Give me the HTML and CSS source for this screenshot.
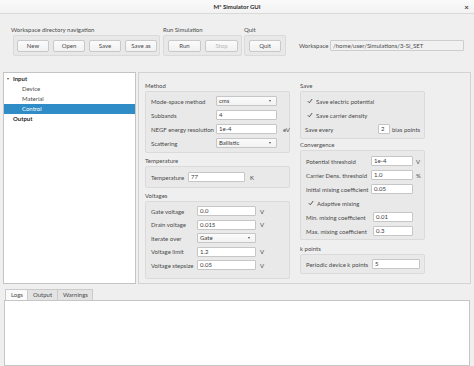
FILE: index.html
```html
<!DOCTYPE html>
<html>
<head>
<meta charset="utf-8">
<link rel="stylesheet" href="styles.css">
</head>
<body>
<div class="window">
  <div class="titlebar">
    <span class="title">M* Simulator GUI</span>
    <span class="close">×</span>
  </div>
  <div class="toolbar">
    <div class="tgroup g1">
      <div class="glabel">Workspace directory navigation</div>
      <div class="gframe">
        <div class="btn">New</div><div class="btn">Open</div><div class="btn">Save</div><div class="btn">Save as</div>
      </div>
    </div>
    <div class="tgroup g2">
      <div class="glabel">Run Simulation</div>
      <div class="gframe">
        <div class="btn w33">Run</div><div class="btn w33 disabled">Stop</div>
      </div>
    </div>
    <div class="tgroup g3">
      <div class="glabel">Quit</div>
      <div class="gframe">
        <div class="btn">Quit</div>
      </div>
    </div>
    <div class="workspace">
      <span class="wlabel">Workspace</span>
      <div class="wfield">/home/user/Simulations/3-Si_SET</div>
    </div>
  </div>

  <div class="main">
    <div class="tree">
      <div class="titem top"><span class="arrow"></span>Input</div>
      <div class="titem child">Device</div>
      <div class="titem child">Material</div>
      <div class="titem child selected">Control</div>
      <div class="titem top">Output</div>
    </div>
    <div class="content">
      <div class="col left">
        <div class="slabel">Method</div>
        <div class="frame method">
          <div class="row"><span class="lbl">Mode-space method</span><div class="combo">cms<span class="tri"></span></div></div>
          <div class="row"><span class="lbl">Subbands</span><div class="input">4</div></div>
          <div class="row"><span class="lbl">NEGF energy resolution</span><div class="input">1e-4</div><span class="unit">eV</span></div>
          <div class="row"><span class="lbl">Scattering</span><div class="combo">Ballistic<span class="tri"></span></div></div>
        </div>
        <div class="slabel mt2">Temperature</div>
        <div class="frame temp">
          <div class="row"><span class="lbl">Temperature</span><div class="input">77</div><span class="unit">K</span></div>
        </div>
        <div class="slabel mt2">Voltages</div>
        <div class="frame volt grow">
          <div class="row"><span class="lbl">Gate voltage</span><div class="input">0.0</div><span class="unit">V</span></div>
          <div class="row"><span class="lbl">Drain voltage</span><div class="input">0.015</div><span class="unit">V</span></div>
          <div class="row"><span class="lbl">Iterate over</span><div class="combo">Gate<span class="tri"></span></div></div>
          <div class="row"><span class="lbl">Voltage limit</span><div class="input">1.2</div><span class="unit">V</span></div>
          <div class="row"><span class="lbl">Voltage stepsize</span><div class="input">0.05</div><span class="unit">V</span></div>
        </div>
      </div>
      <div class="col right">
        <div class="slabel">Save</div>
        <div class="frame save">
          <div class="row check"><span class="cb"><svg width="6" height="6" viewBox="0 0 6 6"><path d="M0.8 3.2 L2.3 4.8 L5.2 1" fill="none" stroke="#444" stroke-width="0.9"/></svg></span>Save electric potential</div>
          <div class="row check"><span class="cb"><svg width="6" height="6" viewBox="0 0 6 6"><path d="M0.8 3.2 L2.3 4.8 L5.2 1" fill="none" stroke="#444" stroke-width="0.9"/></svg></span>Save carrier density</div>
          <div class="row"><span class="lbl">Save every</span><div class="input">2</div><span class="unit">bias points</span></div>
        </div>
        <div class="slabel">Convergence</div>
        <div class="frame conv">
          <div class="row"><span class="lbl">Potential threshold</span><div class="input">1e-4</div><span class="unit">V</span></div>
          <div class="row"><span class="lbl">Carrier Dens. threshold</span><div class="input">1.0</div><span class="unit">%</span></div>
          <div class="row"><span class="lbl">Initial mixing coefficient</span><div class="input">0.05</div></div>
          <div class="row check"><span class="cb"><svg width="6" height="6" viewBox="0 0 6 6"><path d="M0.8 3.2 L2.3 4.8 L5.2 1" fill="none" stroke="#444" stroke-width="0.9"/></svg></span>Adaptive mixing</div>
          <div class="row mm"><span class="lbl">Min. mixing coefficient</span><div class="input">0.01</div></div>
          <div class="row mm"><span class="lbl">Max. mixing coefficient</span><div class="input">0.3</div></div>
        </div>
        <div class="slabel mt3">k points</div>
        <div class="frame kp">
          <div class="row"><span class="lbl">Periodic device k points</span><div class="input">5</div></div>
        </div>
      </div>
    </div>
  </div>

  <div class="tabs">
    <div class="tab active">Logs</div>
    <div class="tab">Output</div>
    <div class="tab">Warnings</div>
  </div>
  <div class="log"></div>
</div>
</body>
</html>
```

FILE: styles.css
```css
* { box-sizing: border-box; }
html, body { margin: 0; padding: 0; }
body {
  width: 474px;
  height: 366px;
  background: #efefef;
  font-family: Lato, "Open Sans", sans-serif;
  font-size: 6px;
  color: #4a4a4a;
  overflow: hidden;
  white-space: nowrap;
}
.window { width: 474px; height: 366px; display: flex; flex-direction: column; }

.titlebar {
  height: 15px;
  background: linear-gradient(#fafafa, #f2f2f2);
  border-bottom: 1px solid #d9d9d9;
  display: flex;
  align-items: center;
  justify-content: center;
  position: relative;
}
.title { font-weight: 700; color: #2e2e2e; }
.close { position: absolute; right: 5px; top: 2px; font-size: 8px; font-weight: 700; color: #444; }

.toolbar {
  height: 42px;
  margin-top: 10px;
  display: flex;
  align-items: flex-start;
  padding-left: 11px;
}
.tgroup { display: flex; flex-direction: column; flex: none; }
.glabel { height: 11px; line-height: 11px; }
.gframe {
  height: 21px;
  display: flex;
  align-items: center;
  gap: 4px;
  padding: 0 2px 0 3px;
  margin-left: 2px;
  background: #e8e8e8;
  border: 1px solid #dadada;
  border-radius: 2px;
}
.g2 { margin-left: 3px; }
.g2 .gframe { padding: 0 3px 0 4px; gap: 4px; margin-left: 0; }
.g3 { margin-left: 2px; }
.g3 .gframe { padding: 0 4px 0 4px; margin-left: 0; }
.btn {
  flex: none;
  width: 32px;
  height: 12px;
  line-height: 10px;
  text-align: center;
  background: linear-gradient(#fbfbfb, #f1f1f1);
  border: 1px solid #c9c9c9;
  border-radius: 2px;
}
.btn.w33 { width: 33px; }
.btn.disabled { color: #b8b8b8; }

.workspace {
  margin-left: 13px;
  margin-top: 11px;
  height: 21px;
  display: flex;
  align-items: center;
  flex: none;
}
.wlabel { width: 31px; flex: none; }
.wfield {
  flex: none;
  width: 134px;
  height: 11px;
  line-height: 9px;
  padding-left: 2px;
  background: #f1f1f1;
  border: 1px solid #cdcdcd;
  border-radius: 1px;
}

.main {
  margin-top: 8px;
  height: 212px;
  display: flex;
  padding-left: 3px;
  gap: 2px;
}
.tree {
  width: 133px;
  height: 212px;
  background: #ffffff;
  border: 1px solid #c4c4c4;
  padding-top: 1px;
}
.titem { height: 10px; line-height: 10px; padding-left: 9px; position: relative; }
.titem.top { font-weight: 700; color: #2a2a2a; }
.titem.child { padding-left: 18px; }
.titem.selected { background: #308cc6; color: #ffffff; }
.arrow {
  position: absolute; left: 3px; top: 4px;
  width: 0; height: 0;
  border-left: 1.5px solid transparent;
  border-right: 1.5px solid transparent;
  border-top: 2px solid #555;
}

.content {
  width: 333px;
  height: 212px;
  border: 1px solid #d3d3d3;
  padding: 7px 0 4px 6px;
  display: flex;
  gap: 10px;
}
.col { display: flex; flex-direction: column; }
.col.left { width: 145px; }
.col.right { width: 125px; }
.slabel { height: 11px; line-height: 11px; }
.mt2 { margin-top: 2px; }
.mt3 { margin-top: 3px; }
.frame {
  border: 1px solid #dadada;
  border-radius: 2px;
  background: #e9e9e9;
  padding: 2px 0 2px 5px;
}
.grow { flex: 1; }
.row { height: 14px; display: flex; align-items: center; }
.lbl { flex: none; }
.input, .combo {
  flex: none;
  height: 10px;
  line-height: 8px;
  padding-left: 2px;
  border: 1px solid #c6c6c6;
  border-radius: 1px;
  background: #ffffff;
  color: #3a3a3a;
}
.combo { background: linear-gradient(#fbfbfb, #f2f2f2); position: relative; }
.tri {
  position: absolute; right: 5px; top: 3px;
  width: 0; height: 0;
  border-left: 1.5px solid transparent;
  border-right: 1.5px solid transparent;
  border-top: 2px solid #555;
}
.unit { margin-left: 6px; }

.method .lbl { width: 65px; }
.method .input, .method .combo { width: 61px; }

.temp { padding-top: 3px; padding-bottom: 3px; }
.temp .lbl { width: 37px; }
.temp .input { width: 57px; }
.temp .unit { margin-left: 5px; }

.volt .row { height: 13.6px; }
.volt .lbl { width: 46px; }
.volt .input, .volt .combo { width: 59px; }
.volt .unit { margin-left: 4px; }

.save { padding-left: 4px; }
.save .lbl { width: 73px; }
.save .input { width: 12px; }
.save .unit { margin-left: 2px; }
.check { padding-left: 2px; }
.cb { width: 6px; height: 6px; margin-right: 3px; display: flex; }

.conv { padding-top: 3px; padding-bottom: 1px; }
.conv .lbl { width: 65px; }
.conv .input { width: 42px; }
.conv .mm .lbl { width: 67px; }
.conv .mm .input { width: 40px; }
.conv .unit { margin-left: 3px; }

.kp .lbl { width: 66px; }
.kp .input { width: 48px; }

.tabs {
  margin-top: 5px;
  height: 11px;
  display: flex;
  padding-left: 5px;
}
.tab {
  height: 11px;
  line-height: 10px;
  padding: 0 5px;
  background: #e3e3e3;
  border: 1px solid #cbcbcb;
  border-bottom: none;
  margin-left: -1px;
}
.tab:first-child { margin-left: 0; }
.tab.active { background: #fafafa; width: 23px; }
.tab:nth-child(2) { width: 31px; }
.tab:nth-child(3) { width: 36px; }
.log {
  margin: 0 4px 0 4px;
  height: 69px;
  background: #ffffff;
  border: 1px solid #c6c6c6;
}
```
